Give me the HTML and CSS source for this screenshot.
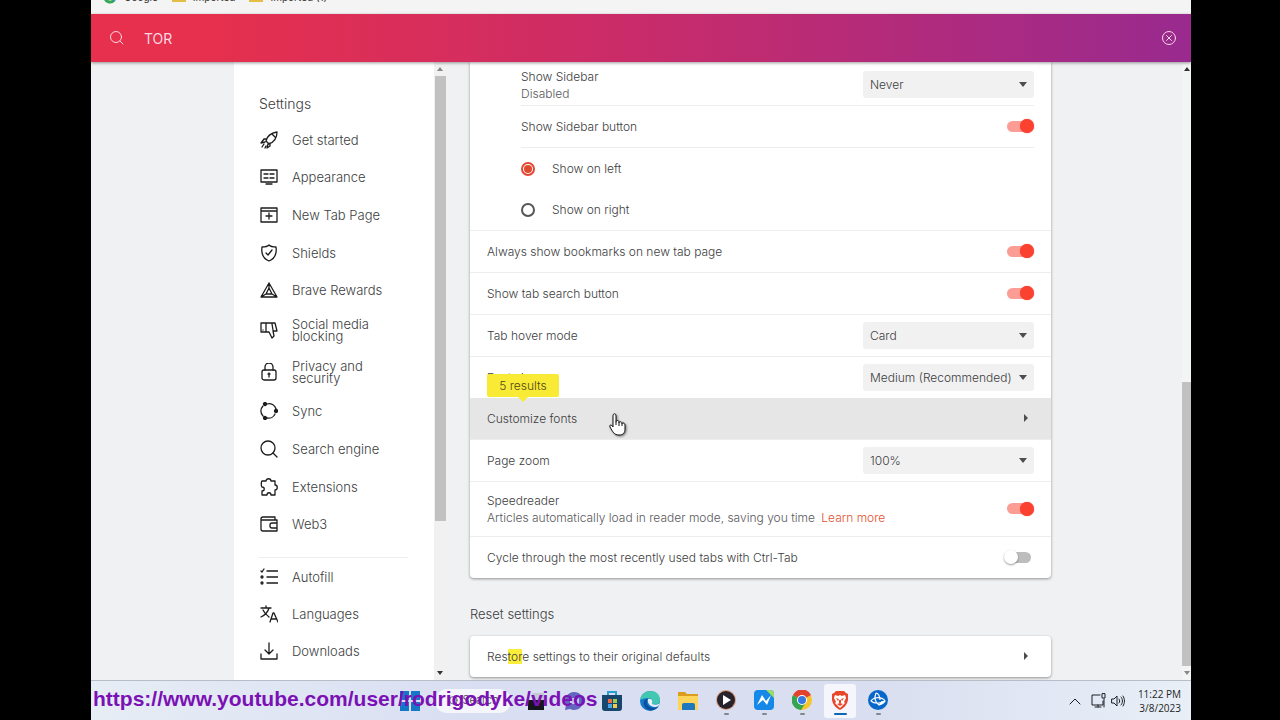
FILE: index.html
```html
<!DOCTYPE html>
<html lang="en">
<head>
    <meta charset="UTF-8">
    <meta name="viewport" content="width=device-width, initial-scale=1.0">
    <title>Settings</title>
    <link rel="stylesheet" href="styles.css">
</head>
<body>
    <div class="screen">
        <div class="bookmarks">
            <a href="#"><svg width="14" height="14" viewBox="0 0 14 14"><path d="M2 7a5 5 0 0 0 9 3" fill="none" stroke="#34a853" stroke-width="3"/><path d="M7 7h5v2l-1 2" fill="none" stroke="#4285f4" stroke-width="2"/></svg>Google</a>
            <a href="#"><svg width="14" height="14" viewBox="0 0 14 14"><path d="M0 1h5l2 2h7v9H0z" fill="#e3bd46"/><path d="M1 5h12v5H1z" fill="#f5dc82"/></svg>Imported</a>
            <a href="#"><svg width="14" height="14" viewBox="0 0 14 14"><path d="M0 1h5l2 2h7v9H0z" fill="#e3bd46"/><path d="M1 5h12v5H1z" fill="#f5dc82"/></svg>Imported (1)</a>
        </div>

        <header class="toolbar">
            <svg class="line" width="16" height="16" viewBox="0 0 16 16"><circle cx="7" cy="7" r="5.5"/><path d="M11 11l3 3"/></svg>
            <input class="search" type="text" value="TOR" aria-label="Search settings">
            <button class="clear" type="button" aria-label="Clear search">
                <svg class="line" width="16" height="16" viewBox="0 0 16 16"><circle cx="8" cy="8" r="6.5"/><path d="M5.5 5.5l5 5M10.5 5.5l-5 5"/></svg>
            </button>
        </header>

        <div class="page">
            <nav class="sidebar">
                <h2>Settings</h2>
                <ul class="menu">
                    <li><a href="#"><svg class="line" viewBox="0 0 18 18"><path d="M6 10c1-5 5-8 11-9 0 6-3 10-8 12zM6 8H4l-3 4 4-1M10 12v3l-3 2 1-4M12 3l3 3M4 13l-2 3M6 15l-1 2"/></svg>Get started</a></li>
                    <li><a href="#"><svg class="line" viewBox="0 0 18 18"><path d="M1 2h16v12H1zM6 16h6M4 6h4M10 6h4M4 10h4M10 10h4"/></svg>Appearance</a></li>
                    <li><a href="#"><svg class="line" viewBox="0 0 18 18"><path d="M1 2h16v14H1zM1 5h16M9 7v6M6 10h6"/></svg>New Tab Page</a></li>
                    <li><a href="#"><svg class="line" viewBox="0 0 18 18"><path d="M9 1c2 2 5 2 7 2 1 7-2 12-7 14C4 15 1 10 2 3c2 0 5 0 7-2zM6 9l2 2 4-5"/></svg>Shields</a></li>
                    <li><a href="#"><svg class="line" viewBox="0 0 18 18"><path d="M9 2L1 16h16zM9 7l-3 6h6zM9 2v5M1 16l5-3M17 16l-5-3"/></svg>Brave Rewards</a></li>
                    <li class="tall"><a href="#"><svg class="line" viewBox="0 0 18 18"><path d="M1 2h5v9H1zM3 9v0M6 2h9l2 8h-4l1 5-2 2-3-6H6M12 3l1 6"/></svg>Social media blocking</a></li>
                    <li class="tall"><a href="#"><svg class="line" viewBox="0 0 18 18"><rect x="2" y="7" width="14" height="10" rx="2"/><path d="M5 7V4a4 4 0 0 1 8 0v3M9 10v4M8 11h2"/></svg>Privacy and security</a></li>
                    <li><a href="#"><svg class="line" viewBox="0 0 18 18"><path d="M7 2a7 7 0 0 1 9 5M15 12a7 7 0 0 1-8 4M3 14A7 7 0 0 1 3 4"/><circle class="dot" cx="5" cy="2" r="1.5"/><circle class="dot" cx="16" cy="9" r="1.5"/><circle class="dot" cx="5" cy="16" r="1.5"/></svg>Sync</a></li>
                    <li><a href="#"><svg class="line" viewBox="0 0 18 18"><circle cx="8" cy="8" r="7"/><path d="M13 13l4 4"/></svg>Search engine</a></li>
                    <li><a href="#"><svg class="line" viewBox="0 0 18 18"><path d="M2 3h4c0-3 5-3 5 0h4v4c3 0 3 5 0 5v5h-4c0-3-4-3-4 0H2v-4c3 0 3-4 0-4-1-1-1-5 0-6z"/></svg>Extensions</a></li>
                    <li><a href="#"><svg class="line" viewBox="0 0 18 18"><path d="M15 5V2H3a2 2 0 0 0-2 2v10a2 2 0 0 0 2 2h14V5H2M17 8h-5a2 2 0 0 0-2 2v1a2 2 0 0 0 2 2h5"/></svg>Web3</a></li>
                </ul>
                <ul class="menu more">
                    <li><a href="#"><svg class="line" viewBox="0 0 18 18"><path d="M7 3h11M7 9h11M7 15h11M1 3l1 1 2-3"/><circle cx="2" cy="9" r="1"/><circle cx="2" cy="15" r="1"/></svg>Autofill</a></li>
                    <li><a href="#"><svg class="line" viewBox="0 0 18 18"><path d="M1 3h10M6 1v2M9 3C8 7 5 10 1 12M3 5c2 4 4 5 6 7M10 17l3-9h1l4 9M11 14h5"/></svg>Languages</a></li>
                    <li><a href="#"><svg class="line" viewBox="0 0 18 18"><path d="M9 1v11M5 8l4 4 4-4M1 12v5h16v-5"/></svg>Downloads</a></li>
                </ul>
            </nav>
            <div class="scrollbar inner"><i class="up"></i><b class="thumb"></b><i class="down"></i></div>

            <main class="content">
                <section class="card">
                    <div class="row sub first">
                        <label for="sidebar">Show Sidebar<small>Disabled</small></label>
                        <div class="select"><select id="sidebar"><option>Never</option><option>Always</option></select></div>
                    </div>
                    <div class="row sub">
                        <label for="sidebarButton">Show Sidebar button</label>
                        <input class="toggle" type="checkbox" id="sidebarButton" checked>
                    </div>
                    <div class="radios">
                        <label><input type="radio" name="side" checked>Show on left</label>
                        <label><input type="radio" name="side">Show on right</label>
                    </div>
                    <div class="row">
                        <label for="bookmarksBar">Always show bookmarks on new tab page</label>
                        <input class="toggle" type="checkbox" id="bookmarksBar" checked>
                    </div>
                    <div class="row">
                        <label for="tabSearch">Show tab search button</label>
                        <input class="toggle" type="checkbox" id="tabSearch" checked>
                    </div>
                    <div class="row">
                        <label for="hoverMode">Tab hover mode</label>
                        <div class="select"><select id="hoverMode"><option>Card</option><option>Tooltip</option></select></div>
                    </div>
                    <div class="row">
                        <label for="fontSize">Font size</label>
                        <div class="select"><select id="fontSize"><option>Medium (Recommended)</option><option>Large</option></select></div>
                    </div>
                    <div class="hovered">
                        <button class="row link" type="button">Customize fonts<i class="arrow"></i></button>
                        <span class="bubble">5 results</span>
                        <svg class="cursor" width="18" height="24" viewBox="0 0 18 24"><path d="M5 14V3c0-3 3-3 3 0v6c0-2 3-2 3 0v1c0-2 3-1 3 0v1c0-2 3-1 3 1v4c0 4-2 6-6 6-5 0-6-3-9-8-1-2 1-3 3 0z" fill="#fff" stroke="#111" stroke-linejoin="round"/><path d="M8 9v3M11 10v3M14 11v2" stroke="#111"/></svg>
                    </div>
                    <div class="row">
                        <label for="zoom">Page zoom</label>
                        <div class="select"><select id="zoom"><option>100%</option><option>125%</option></select></div>
                    </div>
                    <div class="row two-line">
                        <div><label for="speedreader">Speedreader</label><small>Articles automatically load in reader mode, saving you time <a href="#">Learn more</a></small></div>
                        <input class="toggle" type="checkbox" id="speedreader" checked>
                    </div>
                    <div class="row">
                        <label for="cycleTabs">Cycle through the most recently used tabs with Ctrl-Tab</label>
                        <input class="toggle" type="checkbox" id="cycleTabs">
                    </div>
                </section>

                <h2>Reset settings</h2>
                <section class="card round">
                    <button class="row link" type="button"><span>Res<mark>tor</mark>e settings to their original defaults</span><i class="arrow"></i></button>
                </section>
            </main>
            <div class="scrollbar outer"><i class="up"></i><b class="thumb"></b><i class="down"></i></div>
        </div>

        <footer class="taskbar">
            <div class="apps">
                <button type="button" aria-label="Start"><svg viewBox="0 0 20 20"><path d="M0 0h9v9H0zM11 0h9v9h-9zM0 11h9v9H0zM11 11h9v9h-9z" fill="#1677c9"/></svg></button>
                <button class="find" type="button"><svg class="line" width="12" height="12" viewBox="0 0 16 16"><circle cx="7" cy="7" r="5"/><path d="M11 11l4 4"/></svg>Search</button>
                <button type="button" aria-label="Task view"><svg viewBox="0 0 20 20"><path d="M6 2h12v9H6z" fill="#c6c9d4"/><path d="M2 9h16v10H2z" fill="#15151c"/></svg></button>
                <button type="button" aria-label="Chat"><svg viewBox="0 0 20 20"><path d="M10 1a9 9 0 1 1-4 17l-5 1 1-5A9 9 0 0 1 10 1z" fill="#6366bf"/><path d="M6 7h6v6H6zM12 9l3-2v6l-3-2z" fill="#c9cbef"/></svg></button>
                <button type="button" aria-label="Store"><svg viewBox="0 0 20 20"><path d="M6 5V1h8v4" fill="none" stroke="#2a9fd6" stroke-width="2"/><path d="M0 4h20v13a3 3 0 0 1-3 3H3a3 3 0 0 1-3-3z" fill="#17466f"/><path d="M6 8h4v4H6z" fill="#ee6a4b"/><path d="M11 8h4v4h-4z" fill="#9fcb4d"/><path d="M6 13h4v4H6z" fill="#43a8e8"/><path d="M11 13h4v4h-4z" fill="#f5c84a"/></svg></button>
                <button type="button" aria-label="Edge"><svg viewBox="0 0 20 20"><circle cx="10" cy="10" r="10" fill="#1478c8"/><path d="M0 9C2-3 20-3 20 9c0 5-5 5-8 4 2-3 0-6-4-6-4 0-6 1-8 2z" fill="#42c7b0"/><path d="M8 8c-3 4 0 9 6 9 2 0 4-1 5-2-4 6-13 6-15-1-1-4 1-6 4-6z" fill="#0d4f9e"/><path d="M8 8c5-1 5 3 4 5 3 1 6 1 8-1-1 3-3 4-5 4-5 0-8-4-7-8z" fill="#e5eff9"/></svg></button>
                <button type="button" aria-label="File Explorer"><svg viewBox="0 0 20 20"><path d="M0 1h7l2 2h11v5H0z" fill="#dc9c1d"/><path d="M0 5h20v14H0z" fill="#fcd55a"/><path d="M4 14a2 2 0 0 1 2-2h9a2 2 0 0 1 2 2v5H4z" fill="#1e78be"/></svg></button>
                <button class="open" type="button" aria-label="Media player"><svg viewBox="0 0 20 20"><circle cx="10" cy="10" r="10" fill="#d79a78"/><circle cx="10" cy="10" r="9" fill="#28222d"/><path d="M7 5l8 5-8 5z" fill="#fff"/></svg></button>
                <button class="open" type="button" aria-label="Monitor"><svg viewBox="0 0 20 20"><rect width="20" height="20" rx="4" fill="#1688e8"/><path d="M12 0h4a4 4 0 0 1 4 4v4z" fill="#9bdd65"/><path d="M3 15l5-10 4 6 5-6-4 10-4-5z" fill="#fff"/></svg></button>
                <button class="open" type="button" aria-label="Chrome"><svg viewBox="0 0 20 20"><circle cx="10" cy="10" r="10" fill="#f5c52b"/><path d="M10 10L1 5a10 10 0 0 1 18 0z" fill="#e2432e"/><path d="M10 10L1 5a10 10 0 0 0 8 15l5-8z" fill="#35a552"/><circle cx="10" cy="10" r="5" fill="#fff"/><circle cx="10" cy="10" r="4" fill="#3878e0"/></svg></button>
                <button class="open active" type="button" aria-label="Brave"><svg viewBox="0 0 20 20"><path d="M6 1h8l2 2 2 1v6c-1 5-4 8-8 10-4-2-7-5-8-10V4l2-1z" fill="#e8472c"/><path d="M5 5l3 1 2-1 2 1 3-1 1 3-2 4 1 1-5 5-5-5 1-1-2-4z" fill="#fff"/><path d="M6 8l3 1-1 2zM14 8l-3 1 1 2zM9 10h2v3h-2zM7 14l3-1 3 1-3 2z" fill="#e8472c"/></svg></button>
                <button class="open" type="button" aria-label="Game launcher"><svg viewBox="0 0 20 20"><circle cx="10" cy="10" r="10" fill="#0967c9"/><path d="M8 3c-2 5-1 9 3 12 2-1 3-3 3-4M8 3c2 0 4 3 4 7M3 11c3 3 9 3 14 0-2-3-6-4-10-3M3 11c0-1 2-2 4-3M17 11c-1 2-3 3-6 4" fill="none" stroke="#fff" stroke-width="1.2"/></svg></button>
            </div>
            <div class="tray">
                <svg class="line" width="12" height="12" viewBox="0 0 12 12"><path d="M1 9l5-5 5 5"/></svg>
                <svg class="line" width="15" height="15" viewBox="0 0 15 15"><path d="M9 2H1v10h11V8M4 14h6M7 12v2M13 6v8M11 1v4h3V1z"/></svg>
                <svg class="line" width="14" height="14" viewBox="0 0 14 14"><path d="M1 5h2l3-3v10L3 9H1zM8 5c1 1 1 3 0 4M10 3c2 2 2 6 0 8M12 2c2 3 2 7 0 10"/></svg>
                <div class="clock">11:22 PM<br>3/8/2023</div>
            </div>
            <a class="watermark" href="#">https://www.youtube.com/user/rodrigodyke/videos</a>
        </footer>
    </div>
</body>
</html>
```
FILE: styles.css
```css
* {
    margin: 0;
    padding: 0;
    box-sizing: border-box;
}

body {
    height: 100vh;
    padding: 0 89px 0 91px;
    background: #000;
    color: #3c3d40;
    font-family: Inter, 'Open Sans', sans-serif;
    font-size: 12px;
    font-weight: 300;
    line-height: 17px;
}

a {
    color: inherit;
    text-decoration: none;
}

button,
input,
select {
    border: none;
    background: none;
    color: inherit;
    font: inherit;
}

.line {
    fill: none;
    stroke: currentColor;
    stroke-linecap: round;
    stroke-linejoin: round;
}

.screen {
    display: flex;
    flex-direction: column;
    height: 100%;
    background: #f0f1f2;
}

.bookmarks {
    display: flex;
    flex: none;
    align-items: flex-end;
    gap: 14px;
    height: 14px;
    padding: 0 12px 10px;
    overflow: hidden;
    background: #f5f4f4;
    color: #333;
    font-size: 10px;
    font-weight: 400;
    line-height: 14px;
}

.bookmarks a {
    display: flex;
    gap: 7px;
}

.toolbar {
    position: relative;
    z-index: 2;
    display: flex;
    flex: none;
    align-items: center;
    gap: 19px;
    height: 48px;
    padding: 0 14px 0 18px;
    background: linear-gradient(90deg, #e6304d 10%, #cd2c66 45%, #992a8f);
    box-shadow: 0 1px 3px rgba(0, 0, 0, 0.4);
    color: #fbd9e2;
}

.search {
    flex: 1;
    min-width: 0;
    font-size: 14px;
    font-weight: 400;
}

.clear {
    height: 16px;
}

.page {
    display: flex;
    flex: 1;
    min-height: 0;
    overflow: hidden;
}

.sidebar {
    flex: none;
    width: 200px;
    margin-left: 13%;
    padding: 32px 26px 0 25px;
    overflow: hidden;
    background: #fff;
    font-size: 13px;
}

h2 {
    font-size: 13px;
    font-weight: 300;
    line-height: 20px;
}

.sidebar h2 {
    font-size: 14px;
}

.menu {
    display: flex;
    flex-direction: column;
    height: 422px;
    margin-top: 7px;
    list-style: none;
}

.menu li {
    flex: 1 1 37px;
    display: flex;
    align-items: center;
}

.menu .tall {
    flex-basis: 41px;
}

.menu a {
    display: flex;
    align-items: center;
    gap: 14px;
    width: 130px;
    line-height: 12px;
}

.menu svg {
    flex: none;
    width: 18px;
    height: 18px;
    margin-left: 1px;
    color: #1c1c1c;
    stroke-width: 1.3;
}

.menu .dot {
    fill: currentColor;
}

.menu.more {
    height: 113px;
    margin-top: 14px;
    border-top: 1px solid #eee;
}

.scrollbar {
    display: flex;
    flex: none;
    flex-direction: column;
    background: #f1f1f1;
}

.scrollbar i {
    flex: none;
    width: 0;
    height: 4px;
    margin: 5px auto;
    border: 3px solid transparent;
    border-top: none;
    border-bottom: 4px solid #333;
}

.scrollbar .down {
    border-top: 4px solid #333;
    border-bottom: none;
}

.thumb {
    background: #c1c1c1;
}

.inner {
    width: 12px;
}

.inner .thumb {
    height: 72%;
    margin: 0 0 auto 1px;
}

.inner .up {
    border-bottom-color: #888;
}

.outer {
    width: 9px;
    margin-left: auto;
    background: #f3f4f4;
}

.outer .thumb {
    height: 46%;
    margin-top: auto;
}

.outer .down {
    border-top-color: #888;
}

.content {
    flex: 0 1 581px;
    min-width: 0;
    margin-left: 24px;
}

.content h2 {
    margin: 26px 0 12px;
}

.card {
    border-radius: 0 0 4px 4px;
    background: #fff;
    box-shadow: 0 1px 3px rgba(0, 0, 0, 0.4);
}

.card.round {
    border-radius: 4px;
    overflow: hidden;
}

.row {
    display: flex;
    align-items: center;
    justify-content: space-between;
    width: 100%;
    min-height: 42px;
    padding: 0 17px 1px;
    border-top: 1px solid #ededed;
    text-align: left;
}

.row.sub {
    width: auto;
    margin: 0 17px 0 51px;
    padding: 0 0 1px;
}

.row.first {
    height: 43px;
    padding: 2px 0 0;
    border: none;
}

.row.two-line {
    min-height: 55px;
}

.row.link {
    min-height: 41px;
    border: none;
    cursor: pointer;
}

small {
    display: block;
    color: #58595c;
    font-size: 12px;
}

small a {
    margin-left: 3px;
    color: #e4502f;
}

.radios {
    margin: 0 17px 0 51px;
    border-top: 1px solid #ededed;
}

.radios label {
    display: flex;
    align-items: center;
    gap: 17px;
    height: 41px;
}

.radios input {
    appearance: none;
    display: grid;
    place-items: center;
    width: 14px;
    height: 14px;
    border: 2px solid #55565a;
    border-radius: 50%;
}

.radios input:checked {
    border-color: #e0482f;
}

.radios input:checked::before {
    content: '';
    width: 8px;
    height: 8px;
    border-radius: 50%;
    background: #e0482f;
}

.toggle {
    appearance: none;
    position: relative;
    flex: none;
    display: flex;
    align-items: center;
    width: 30px;
    height: 14px;
}

.toggle::before {
    content: '';
    position: absolute;
    left: 3px;
    width: 24px;
    height: 11px;
    border-radius: 6px;
    background: #bdbdbd;
}

.toggle::after {
    content: '';
    z-index: 1;
    width: 14px;
    height: 14px;
    border-radius: 50%;
    background: #fff;
    box-shadow: 0 1px 2px rgba(0, 0, 0, 0.4);
}

.toggle:checked {
    justify-content: flex-end;
}

.toggle:checked::before {
    background: #fb9d95;
}

.toggle:checked::after {
    background: #fb4130;
    box-shadow: 0 0 1px #fb4130;
}

.select {
    display: grid;
    align-items: center;
    width: 171px;
    border-radius: 3px;
    background: #f1f1f2;
}

.select select {
    grid-area: 1 / 1;
    appearance: none;
    height: 27px;
    padding: 0 20px 0 7px;
}

.select::after {
    content: '';
    grid-area: 1 / 1;
    justify-self: end;
    margin-right: 7px;
    border: 4px solid transparent;
    border-top: 5px solid #4c4d50;
    border-bottom: none;
    pointer-events: none;
}

.hovered {
    position: relative;
    background: #e6e6e6;
}

.arrow {
    margin-right: 6px;
    border: 4px solid transparent;
    border-left-color: #4c4d50;
    border-right: none;
}

.bubble {
    position: absolute;
    top: -24px;
    left: 17px;
    width: 72px;
    border-radius: 2px;
    background: #f9ea35;
    color: #4d481a;
    line-height: 23px;
    text-align: center;
}

.bubble::after {
    content: '';
    position: absolute;
    top: 23px;
    left: 31px;
    border: 5px solid transparent;
    border-top-color: #f9ea35;
    border-bottom: none;
}

.cursor {
    position: absolute;
    top: 15px;
    left: 138px;
    filter: drop-shadow(1px 1px 1px rgba(0, 0, 0, 0.5));
}

mark {
    background: #fbee3a;
    color: inherit;
}

.taskbar {
    position: relative;
    z-index: 2;
    display: flex;
    flex: none;
    align-items: center;
    justify-content: space-between;
    height: 40px;
    padding: 0 10px 0 300px;
    border-top: 1px solid #b9bdc8;
    background: linear-gradient(90deg, #e6edf5, #d9dff2 35%, #d9def0 70%, #e8eff7);
}

.apps {
    display: flex;
    align-items: center;
}

.apps button {
    display: flex;
    flex-direction: column;
    align-items: center;
    justify-content: center;
    gap: 3px;
    width: 32px;
    height: 34px;
    margin: 0 3px;
    border-radius: 3px;
}

.apps button > svg {
    width: 20px;
    height: 20px;
}

.apps .find {
    flex-direction: row;
    width: 76px;
    height: 24px;
    margin: 0 6px;
    border-radius: 12px;
    background: #f4f6fb;
    font-size: 11px;
}

.apps .find svg {
    width: 12px;
    height: 12px;
}

.apps .open {
    padding-top: 4px;
}

.apps .open::after {
    content: '';
    width: 5px;
    height: 2px;
    border-radius: 1px;
    background: #85868f;
}

.apps .active {
    background: #f4f6fb;
}

.apps .active::after {
    width: 13px;
    background: #0b68b4;
}

.tray {
    display: flex;
    align-items: center;
    gap: 5px;
    color: #1d1f24;
}

.tray svg:first-child {
    margin-right: 5px;
}

.clock {
    margin-left: 8px;
    font-family: 'Open Sans', sans-serif;
    font-size: 10px;
    font-weight: 400;
    line-height: 14px;
    text-align: right;
}

.watermark {
    position: absolute;
    left: 2px;
    top: 6px;
    color: #7b11b5;
    font: bold 21px/24px 'Liberation Sans', Arial, sans-serif;
}
```
